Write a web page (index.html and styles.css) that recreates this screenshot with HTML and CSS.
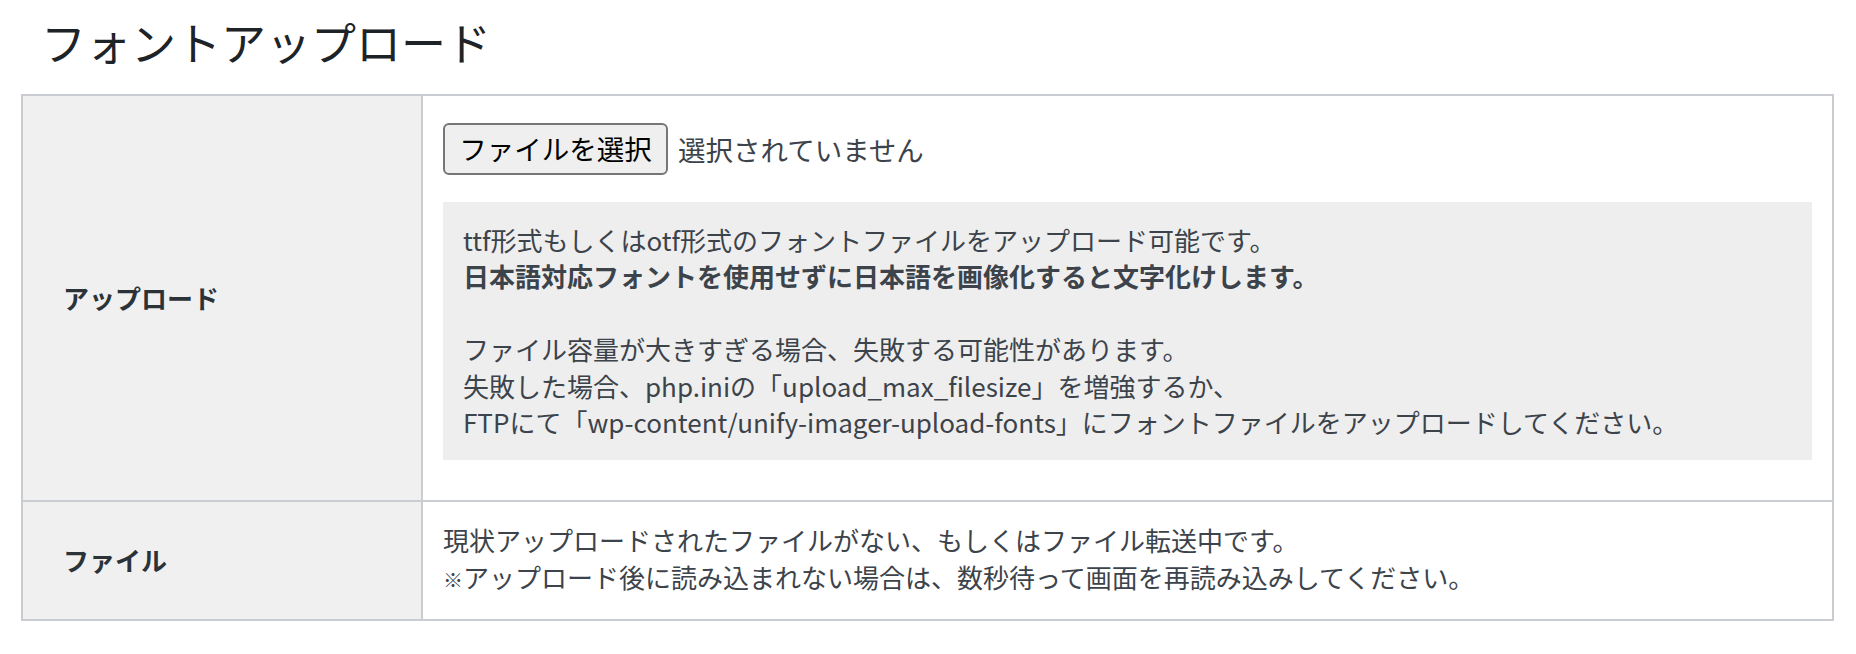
FILE: index.html
```
<!DOCTYPE html>
<html lang="ja">
<head>
<meta charset="utf-8">
<title>フォントアップロード</title>
<link rel="stylesheet" href="styles.css">
</head>
<body>
<div class="wrap">
  <h1 class="page-title">フォントアップロード</h1>
  <table class="upload-table">
    <tr>
      <th class="label">アップロード</th>
      <td class="field field-upload">
        <div class="file-row">
          <span class="file-button">ファイルを選択</span>
          <span class="file-status">選択されていません</span>
        </div>
        <div class="notice">
          <div>ttf形式もしくはotf形式のフォントファイルをアップロード可能です。</div>
          <div class="strong">日本語対応フォントを使用せずに日本語を画像化すると文字化けします。</div>
          <div class="blank">&nbsp;</div>
          <div>ファイル容量が大きすぎる場合、失敗する可能性があります。</div>
          <div>失敗した場合、php.iniの「upload_max_filesize」を増強するか、</div>
          <div>FTPにて「wp-content/unify-imager-upload-fonts」にフォントファイルをアップロードしてください。</div>
        </div>
      </td>
    </tr>
    <tr>
      <th class="label">ファイル</th>
      <td class="field field-files">
        <div>現状アップロードされたファイルがない、もしくはファイル転送中です。</div>
        <div><span class="mark">※</span>アップロード後に読み込まれない場合は、数秒待って画面を再読み込みしてください。</div>
      </td>
    </tr>
  </table>
</div>
</body>
</html>
```
FILE: styles.css
```
html, body {
  margin: 0;
  padding: 0;
  background: #ffffff;
}

body {
  font-family: "Noto Sans CJK JP", "Noto Sans", sans-serif;
  color: #3c434a;
}

.wrap {
  padding: 0 22px 0 21px;
}

.page-title {
  margin: 12px 0 22px 20px;
  font-size: 45px;
  line-height: 60px;
  font-weight: 400;
  color: #1d2327;
}

.upload-table {
  width: 100%;
  border: 2px solid #c9cdd1;
  border-spacing: 0;
  border-collapse: separate;
}

.label {
  width: 400px;
  box-sizing: border-box;
  background: #f0f0f1;
  border-right: 2px solid #c9cdd1;
  padding: 0 0 2px 40px;
  text-align: left;
  vertical-align: middle;
  font-size: 26px;
  font-weight: 700;
  color: #2c3338;
}

.field {
  vertical-align: top;
  font-size: 26px;
  line-height: 36.4px;
}

.field-upload {
  padding: 27px 20px 40px 20px;
}

tr + tr .label,
tr + tr .field {
  border-top: 2px solid #c9cdd1;
}

.field-files {
  padding: 20px 20px 21px 20px;
}

.file-row {
  display: flex;
  align-items: center;
  gap: 10px;
  height: 52px;
}

.file-button {
  display: inline-flex;
  align-items: center;
  justify-content: center;
  box-sizing: border-box;
  height: 52px;
  width: 225px;
  padding: 0 12px;
  border: 2px solid #767676;
  border-radius: 6px;
  background: #efefef;
  color: #000000;
  font-size: 27.5px;
  line-height: 1;
}

.file-status {
  font-size: 27.5px;
  color: #3c434a;
}

.notice {
  margin-top: 27px;
  background: #eeeeee;
  padding: 20px 20px;
  font-size: 26px;
  line-height: 36.4px;
  color: #3c434a;
}

.strong {
  font-weight: 700;
}

.mark {
  font-size: 20px;
}
```
